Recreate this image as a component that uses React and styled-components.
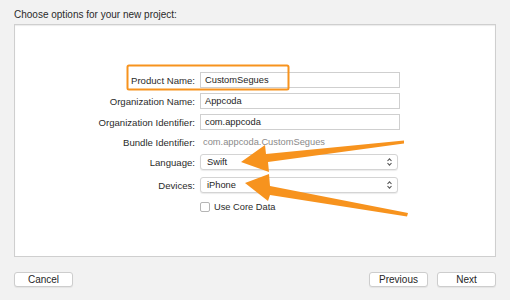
import React from 'react'
import styled, { createGlobalStyle } from 'styled-components'

const GlobalStyle = createGlobalStyle`
    html, body {
        margin: 0;
        padding: 0;
        background: #f2f2f2;
    }
    * { box-sizing: border-box; }
`

const Sheet = styled.div`
    position: relative;
    width: 510px;
    height: 300px;
    padding: 0 14px;
    font-family: "Liberation Sans", Arial, sans-serif;
    font-size: 9.3px;
    color: #262626;
    background: #f2f2f2;
    overflow: hidden;
`
const Title = styled.div`
    height: 24px;
    padding-top: 9px;
    line-height: 12px;
    font-size: 10px;
    color: #2a2a2a;
`
const Panel = styled.div`
    height: 233px;
    background: #fff;
    border: 1px solid #cfcfcf;
    box-shadow: inset 0 1px 1px rgba(0,0,0,.08);
    padding-top: 47px;
`
const Form = styled.div`
    display: flex;
    flex-direction: column;
`
const Row = styled.div`
    display: grid;
    grid-template-columns: 180px 200px;
    column-gap: 5px;
    align-items: center;
    height: 16px;
    margin-top: ${p => p.$gap || 0}px;
`
const Label = styled.div`
    text-align: right;
    font-size: 9.6px;
    color: #2b2b2b;
    white-space: nowrap;
`
const Field = styled.div`
    height: 16px;
    border: 1px solid #cfcfcf;
    background: #fff;
    padding: 0 4px;
    line-height: 14px;
    color: #1e1e1e;
`
const Plain = styled.div`
    color: #8a8a8a;
    line-height: 16px;
    padding-left: 3px;
`
const Popup = styled.div`
    height: 16px;
    width: 198px;
    border: 1px solid #d4d4d4;
    border-radius: 3px;
    background: #fff;
    box-shadow: 0 1px 1px rgba(0,0,0,.08);
    padding: 0 4px 0 6px;
    display: flex;
    align-items: center;
    justify-content: space-between;
    color: #1e1e1e;
`
const CheckWrap = styled.label`
    display: flex;
    align-items: center;
    gap: 4px;
    color: #2b2b2b;
`
const Box = styled.span`
    width: 10px;
    height: 10px;
    border: 1px solid #b5b5b5;
    border-radius: 2px;
    background: #fff;
`
const Footer = styled.div`
    display: flex;
    justify-content: space-between;
    margin-top: 15px;
`
const Group = styled.div`
    display: flex;
    gap: 9px;
`
const Button = styled.button`
    width: 59px;
    height: 15px;
    padding: 0;
    border: 1px solid #cdcdcd;
    border-radius: 3px;
    background: #fff;
    box-shadow: 0 1px 1px rgba(0,0,0,.06);
    font-family: "Liberation Sans", Arial, sans-serif;
    font-size: 10px;
    line-height: 13px;
    color: #262626;
`
const Annotations = styled.svg`
    position: absolute;
    left: 0;
    top: 0;
    pointer-events: none;
`

const Stepper = () => (
    <svg width="7" height="10" viewBox="0 0 7 10">
        <path d="M1.5 4 L3.5 1.8 L5.5 4 M1.5 6 L3.5 8.2 L5.5 6" fill="none" stroke="#555" strokeWidth="1.1" />
    </svg>
)

const ORANGE = '#f7931e'

const App = () => {
    return (
        <>
            <GlobalStyle />
            <Sheet>
                <Title>Choose options for your new project:</Title>
                <Panel>
                    <Form>
                        <Row>
                            <Label>Product Name:</Label>
                            <Field>CustomSegues</Field>
                        </Row>
                        <Row $gap={5}>
                            <Label>Organization Name:</Label>
                            <Field>Appcoda</Field>
                        </Row>
                        <Row $gap={5}>
                            <Label>Organization Identifier:</Label>
                            <Field>com.appcoda</Field>
                        </Row>
                        <Row $gap={4}>
                            <Label>Bundle Identifier:</Label>
                            <Plain>com.appcoda.CustomSegues</Plain>
                        </Row>
                        <Row $gap={4}>
                            <Label>Language:</Label>
                            <Popup>Swift <Stepper /></Popup>
                        </Row>
                        <Row $gap={7}>
                            <Label>Devices:</Label>
                            <Popup>iPhone <Stepper /></Popup>
                        </Row>
                        <Row $gap={6}>
                            <span />
                            <CheckWrap><Box />Use Core Data</CheckWrap>
                        </Row>
                    </Form>
                </Panel>
                <Footer>
                    <Button>Cancel</Button>
                    <Group>
                        <Button>Previous</Button>
                        <Button>Next</Button>
                    </Group>
                </Footer>
                <Annotations width="510" height="300" viewBox="0 0 510 300">
                    <rect x="127.5" y="65.5" width="161" height="24" rx="1.5" fill="none" stroke={ORANGE} strokeWidth="2" />
                    <polygon fill={ORANGE} points="404,140.5 404,143.5 268,162 269,172 241,162 265,145 266,154" />
                    <polygon fill={ORANGE} points="408,213 407,216.5 270,195 268,201 245,183 269,174 270,186" />
                </Annotations>
            </Sheet>
        </>
    )
}

export default App
